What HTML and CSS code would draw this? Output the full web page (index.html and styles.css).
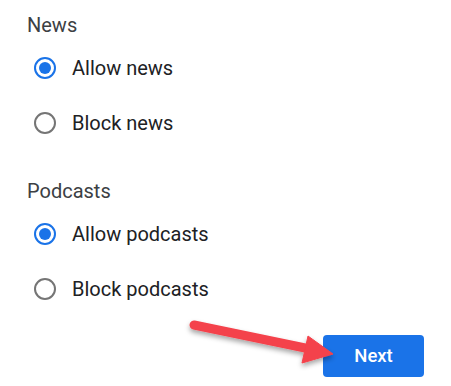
FILE: index.html
```html
<!DOCTYPE html>
<html lang="en">
<head>
  <meta charset="UTF-8">
  <title>Content settings</title>
  <link rel="stylesheet" href="styles.css">
</head>
<body>
  <div class="page">
    <div class="group">
      <div class="group-title">News</div>
      <label class="option">
        <span class="radio checked"></span>
        <span class="option-text">Allow news</span>
      </label>
      <label class="option">
        <span class="radio"></span>
        <span class="option-text">Block news</span>
      </label>
    </div>

    <div class="group">
      <div class="group-title">Podcasts</div>
      <label class="option">
        <span class="radio checked"></span>
        <span class="option-text">Allow podcasts</span>
      </label>
      <label class="option">
        <span class="radio"></span>
        <span class="option-text">Block podcasts</span>
      </label>
    </div>

    <div class="actions">
      <button class="next-btn">Next</button>
    </div>

    <!-- annotation arrow pointing at the button -->
    <svg class="arrow" width="451" height="386" viewBox="0 0 451 386">
      <defs>
        <filter id="shadow" x="-20%" y="-50%" width="140%" height="200%">
          <feDropShadow dx="0" dy="3" stdDeviation="2.5" flood-color="#000" flood-opacity="0.35"/>
        </filter>
      </defs>
      <g filter="url(#shadow)" fill="#f4424b" stroke="#f4424b">
        <line x1="194" y1="325" x2="310" y2="349" stroke-width="9" stroke-linecap="round"/>
        <polygon points="308,336 333,354 302,363" stroke-width="1" stroke-linejoin="round"/>
      </g>
    </svg>
  </div>
</body>
</html>
```

FILE: styles.css
```css
body {
  margin: 0;
  padding: 0;
  background: #ffffff;
  font-family: Roboto, "Noto Sans", sans-serif;
  color: #202124;
}

.page {
  position: relative;
  width: 451px;
  height: 386px;
  padding: 13px 0 0 27px;
  box-sizing: border-box;
}

.group + .group {
  margin-top: 29px;
}

.group-title {
  font-size: 20px;
  line-height: 24px;
  color: #3c4043;
  margin-bottom: 3px;
}

.option {
  display: flex;
  align-items: center;
  height: 55px;
}

.radio {
  width: 18px;
  height: 18px;
  border: 2.5px solid #757575;
  border-radius: 50%;
  margin-left: 7px;
  margin-right: 16px;
  position: relative;
  flex-shrink: 0;
}

.radio.checked {
  border-color: #1a73e8;
}

.radio.checked::after {
  content: "";
  position: absolute;
  top: 3px;
  left: 3px;
  width: 12px;
  height: 12px;
  border-radius: 50%;
  background: #1a73e8;
}

.option-text {
  font-size: 20px;
  color: #202124;
}

.actions {
  display: flex;
  justify-content: flex-end;
  padding-right: 27px;
  margin-top: 19px;
}

.next-btn {
  width: 101px;
  height: 42px;
  border: none;
  border-radius: 4px;
  background: #1a73e8;
  color: #ffffff;
  font-family: Roboto, "Noto Sans", sans-serif;
  font-size: 18.5px;
  font-weight: 500;
}

.arrow {
  position: absolute;
  top: 0;
  left: 0;
  pointer-events: none;
}
```
